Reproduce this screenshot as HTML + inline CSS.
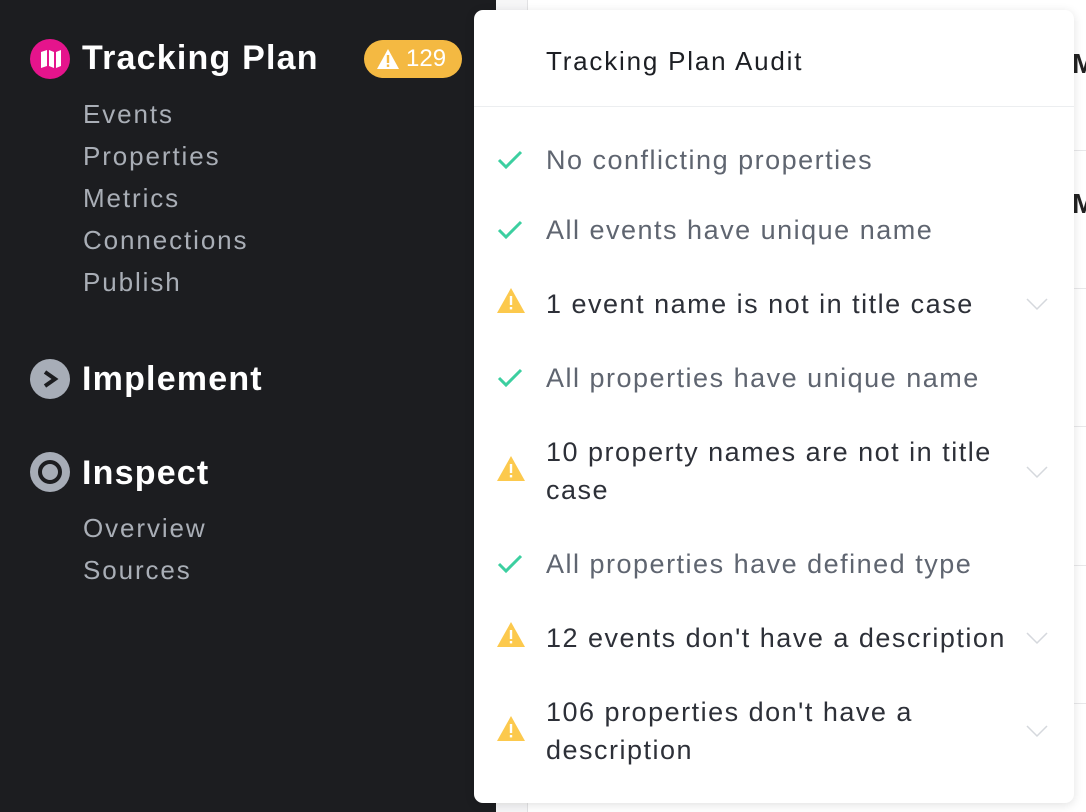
<!DOCTYPE html><html><head><style>
body{margin:0;width:1086px;height:812px;overflow:hidden;background:#f6f6f7;font-family:"Liberation Sans",sans-serif;position:relative}
.side{position:absolute;left:0;top:0;width:496px;height:812px;background:#1c1d20}
.vl{position:absolute;left:527px;top:0;width:1px;height:812px;background:#e2e2e4}
.main{position:absolute;left:528px;top:0;right:0;height:812px;background:#fff}
.h{position:absolute;left:82px;color:#fff;font-size:34px;font-weight:bold;letter-spacing:1.2px;white-space:nowrap}
.s{position:absolute;left:83px;color:#a9aeb6;font-size:26px;letter-spacing:1.9px}
.ic{position:absolute;left:30px;width:40px;height:40px;border-radius:50%}
.pop{position:absolute;left:474px;top:10px;width:600px;height:793px;background:#fff;border-radius:9px;box-shadow:0 2px 10px rgba(0,0,0,.12)}
.t{position:absolute;left:72px;top:36px;font-size:26px;color:#1d1f24;letter-spacing:1.8px}
.hr{position:absolute;left:0;right:0;top:96px;height:1px;background:#eceef0}
.r{position:absolute;left:72px;font-size:27px;color:#5f6570;line-height:38px;letter-spacing:1.5px;white-space:nowrap}
.r.w{color:#2d3038}
.rl{position:absolute;left:528px;right:0;height:1px;background:#e8e8ea}
.edge{position:absolute;left:1072px;font-size:28px;font-weight:bold;color:#222}
</style></head><body>
<div class="side"></div><div class="main"></div><div class="vl"></div>
<div class="rl" style="top:150px"></div><div class="rl" style="top:288px"></div><div class="rl" style="top:426px"></div><div class="rl" style="top:565px"></div><div class="rl" style="top:703px"></div>
<div class="edge" style="top:48px">M</div><div class="edge" style="top:188px">M</div>
<div class="ic" style="top:39px;background:#e5148c"><svg width="40" height="40" viewBox="0 0 40 40"><path d="M11 13l6-2v16l-6 2zM19 11l5 2v16l-5-2zM26 13l5-2v16l-5 2z" fill="#fff"/></svg></div>
<div class="h" style="top:39px">Tracking Plan</div>
<div style="position:absolute;left:364px;top:40px;width:98px;height:38px;border-radius:19px;background:#f4b942;color:#fff;font-size:24px;line-height:38px"><svg style="position:absolute;left:12px;top:8px" width="24" height="22" viewBox="0 0 24 22"><path d="M12 1L23 21H1z" fill="#fff"/><rect x="10.8" y="7" width="2.4" height="8" fill="#f4b942"/><rect x="10.8" y="16.5" width="2.4" height="2.4" fill="#f4b942"/></svg><span style="position:absolute;left:42px">129</span></div>
<div class="s" style="top:99px">Events</div><div class="s" style="top:141px">Properties</div><div class="s" style="top:183px">Metrics</div><div class="s" style="top:225px">Connections</div><div class="s" style="top:267px">Publish</div>
<div class="ic" style="top:359px;background:#a7adb7"><svg width="40" height="40" viewBox="0 0 40 40"><path d="M15 13l10 7-10 7" stroke="#1c1d20" stroke-width="4" fill="none"/></svg></div>
<div class="h" style="top:360px">Implement</div>
<div class="ic" style="top:452px;background:#a7adb7"><div style="position:absolute;left:8px;top:8px;width:16px;height:16px;border:4px solid #1c1d20;border-radius:50%"></div></div>
<div class="h" style="top:454px">Inspect</div>
<div class="s" style="top:513px">Overview</div><div class="s" style="top:555px">Sources</div>
<div class="pop">
<div class="t">Tracking Plan Audit</div><div class="hr"></div>
<div class="r" style="top:131px">No conflicting properties</div>
<div class="r" style="top:201px">All events have unique name</div>
<div class="r w" style="top:275px">1 event name is not in title case</div>
<div class="r" style="top:349px">All properties have unique name</div>
<div class="r w" style="top:423px">10 property names are not in title<br>case</div>
<div class="r" style="top:535px">All properties have defined type</div>
<div class="r w" style="top:609px">12 events don't have a description</div>
<div class="r w" style="top:683px">106 properties don't have a<br>description</div>
<svg style="position:absolute;left:0;top:0" width="600" height="793">
<g stroke="#3ccfa0" stroke-width="3" fill="none"><path d="M25 150l7 7 15-15"/><path d="M25 220l7 7 15-15"/><path d="M25 368l7 7 15-15"/><path d="M25 554l7 7 15-15"/></g>
<g fill="#fcc94d"><path d="M37 278l14 25h-28z"/><path d="M37 446l14 25h-28z"/><path d="M37 612l14 25h-28z"/><path d="M37 706l14 25h-28z"/></g>
<g fill="#fff"><rect x="35.8" y="286" width="2.4" height="9"/><rect x="35.8" y="297" width="2.4" height="2.4"/><rect x="35.8" y="454" width="2.4" height="9"/><rect x="35.8" y="465" width="2.4" height="2.4"/><rect x="35.8" y="620" width="2.4" height="9"/><rect x="35.8" y="631" width="2.4" height="2.4"/><rect x="35.8" y="714" width="2.4" height="9"/><rect x="35.8" y="725" width="2.4" height="2.4"/></g>
<g stroke="#d5d8dd" stroke-width="1.5" fill="none"><path d="M553 289l10 10 10-10"/><path d="M553 457l10 10 10-10"/><path d="M553 623l10 10 10-10"/><path d="M553 716l10 10 10-10"/></g>
</svg>
</div>
</body></html>
